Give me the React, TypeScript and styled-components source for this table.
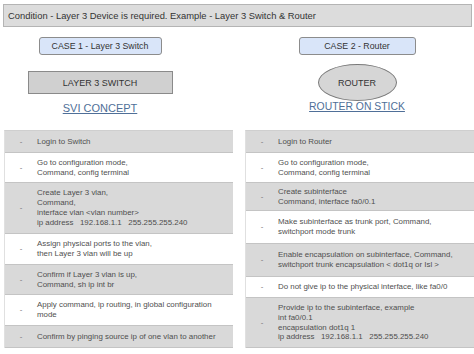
import React from "react";
import styled, { createGlobalStyle } from "styled-components";

const Global = createGlobalStyle`
  html, body { margin: 0; padding: 0; background: #ffffff; }
  body { font-family: "Liberation Sans", Arial, sans-serif; color: #444; }
`;

const Page = styled.div`
  width: 474px;
  height: 354px;
  overflow: hidden;
  padding-top: 4px;
  box-sizing: border-box;
`;

const Banner = styled.div`
  margin: 0 2px 0 3px;
  height: 23px;
  box-sizing: border-box;
  background: #dcdcdc;
  border: 1px solid #b4b4b4;
  display: flex;
  align-items: center;
  padding-left: 4px;
  font-size: 9.4px;
  color: #333;
`;

const Header = styled.div`
  display: grid;
  grid-template-columns: 200px 1fr;
  column-gap: 40px;
  margin-top: 10px;
  height: 89px;
`;

const HeadCol = styled.div<{ $gap: number }>`
  display: flex;
  flex-direction: column;
  align-items: center;
  gap: ${(p) => p.$gap}px;
`;

const CaseButton = styled.div<{ $w: number }>`
  width: ${(p) => p.$w}px;
  height: 18px;
  box-sizing: border-box;
  background: #d9e5f9;
  border: 1px solid #8c8c8c;
  border-radius: 3px;
  display: flex;
  align-items: center;
  justify-content: center;
  font-size: 8.8px;
  color: #333;
`;

const DeviceBox = styled.div`
  width: 145px;
  height: 23px;
  box-sizing: border-box;
  background: #d0d0d0;
  border: 1px solid #8a8a8a;
  display: flex;
  align-items: center;
  justify-content: center;
  font-size: 9px;
  color: #333;
`;

const DeviceOval = styled.div`
  width: 79px;
  height: 37px;
  box-sizing: border-box;
  background: #d6d6d6;
  border: 1px solid #7a7a7a;
  border-radius: 50%;
  display: flex;
  align-items: center;
  justify-content: center;
  font-size: 9px;
  color: #333;
`;

const Concept = styled.div<{ $mt: number; $size: number }>`
  margin-top: ${(p) => p.$mt}px;
  font-size: ${(p) => p.$size}px;
  line-height: 12px;
  color: #4f6f98;
  text-decoration: underline;
  text-underline-offset: 1px;
`;

const Lists = styled.div`
  display: grid;
  grid-template-columns: 229px 229px;
  column-gap: 12px;
  padding-left: 4px;
  margin-top: 4px;
`;

const StepList = styled.div`
  display: flex;
  flex-direction: column;
  border-top: 1px solid #cfcfcf;
  border-left: 1px solid #e0e0e0;
`;

const Step = styled.div<{ $h: number; $shade: boolean }>`
  height: ${(p) => p.$h}px;
  box-sizing: border-box;
  display: grid;
  grid-template-columns: 32px 1fr;
  align-items: center;
  background: ${(p) => (p.$shade ? "#d9d9d9" : "#ffffff")};
  border-bottom: 1px solid #c4c4c4;
  font-size: 7.9px;
  line-height: 9.8px;
  color: #4f4f4f;
`;

const Dash = styled.span`
  text-align: center;
  color: #777;
`;

const StepText = styled.div`
  white-space: pre;
`;

type StepData = { h: number; text: string };

const switchSteps: StepData[] = [
  { h: 22, text: "Login to Switch" },
  { h: 30, text: "Go to configuration mode,\nCommand, config terminal" },
  {
    h: 51,
    text: "Create Layer 3 vlan,\nCommand,\ninterface vlan <vlan number>\nip address   192.168.1.1   255.255.255.240",
  },
  { h: 31, text: "Assign physical ports to the vlan,\nthen Layer 3 vlan will be up" },
  { h: 30, text: "Confirm if Layer 3 vlan is up,\nCommand, sh ip int br" },
  { h: 31, text: "Apply command, ip routing, in global configuration\nmode" },
  { h: 22, text: "Confirm by pinging source ip of one vlan to another" },
];

const routerSteps: StepData[] = [
  { h: 22, text: "Login to Router" },
  { h: 30, text: "Go to configuration mode,\nCommand, config terminal" },
  { h: 28, text: "Create subinterface\nCommand, interface fa0/0.1" },
  { h: 33, text: "Make subinterface as trunk port, Command,\nswitchport mode trunk" },
  {
    h: 33,
    text: "Enable encapsulation on subinterface, Command,\nswitchport trunk encapsulation < dot1q or Isl >",
  },
  { h: 21, text: "Do not give ip to the physical interface, like fa0/0" },
  {
    h: 50,
    text: "Provide ip to the subinterface, example\nint fa0/0.1\nencapsulation dot1q 1\nip address   192.168.1.1   255.255.255.240",
  },
];

function Steps({ items }: { items: StepData[] }) {
  return (
    <StepList>
      {items.map((s, i) => (
        <Step key={i} $h={s.h} $shade={i % 2 === 0}>
          <Dash>-</Dash>
          <StepText>{s.text}</StepText>
        </Step>
      ))}
    </StepList>
  );
}

export default function App() {
  return (
    <>
      <Global />
      <Page>
        <Banner>Condition - Layer 3 Device is required. Example - Layer 3 Switch &amp; Router</Banner>
        <Header>
          <HeadCol $gap={16}>
            <CaseButton $w={123}>CASE 1 - Layer 3 Switch</CaseButton>
            <DeviceBox>LAYER 3 SWITCH</DeviceBox>
            <Concept $mt={-8} $size={11}>SVI CONCEPT</Concept>
          </HeadCol>
          <HeadCol $gap={9}>
            <CaseButton $w={117}>CASE 2 - Router</CaseButton>
            <DeviceOval>ROUTER</DeviceOval>
            <Concept $mt={-9} $size={10.4}>ROUTER ON STICK</Concept>
          </HeadCol>
        </Header>
        <Lists>
          <Steps items={switchSteps} />
          <Steps items={routerSteps} />
        </Lists>
      </Page>
    </>
  );
}
